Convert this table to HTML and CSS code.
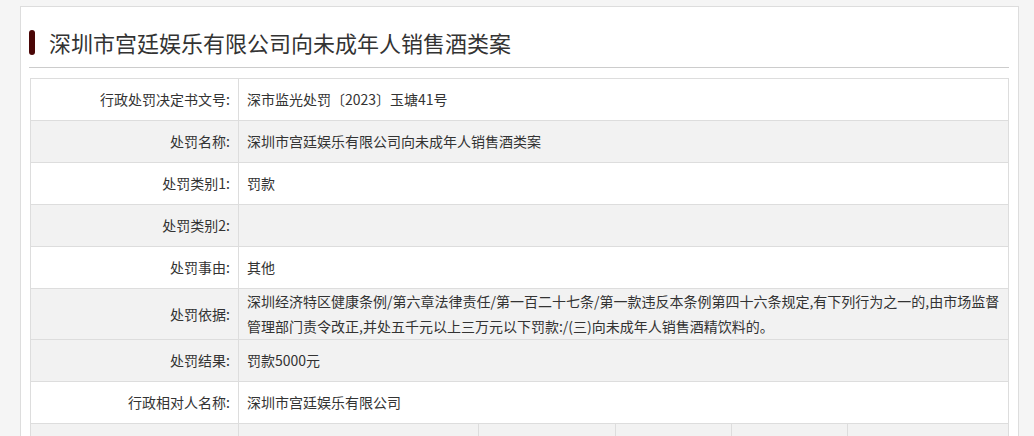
FILE: index.html
```html
<!DOCTYPE html>
<html lang="zh-CN">

<head>
    <meta charset="UTF-8">
    <meta name="viewport" content="width=device-width, initial-scale=1.0">
    <title>深圳市宫廷娱乐有限公司向未成年人销售酒类案</title>
    <link rel="stylesheet" href="styles.css">
</head>

<body>
    <div class="panel">
        <!-- 标题 -->
        <h2 class="title"><i class="title-bar"></i>深圳市宫廷娱乐有限公司向未成年人销售酒类案</h2>

        <!-- 详情表格 -->
        <table class="detail">
            <colgroup>
                <col class="c-label">
                <col class="c-a">
                <col class="c-b">
                <col class="c-c">
                <col class="c-d">
                <col class="c-e">
            </colgroup>
            <tr>
                <th>行政处罚决定书文号:</th>
                <td colspan="5">深市监光处罚〔2023〕玉塘41号</td>
            </tr>
            <tr class="odd">
                <th>处罚名称:</th>
                <td colspan="5">深圳市宫廷娱乐有限公司向未成年人销售酒类案</td>
            </tr>
            <tr>
                <th>处罚类别1:</th>
                <td colspan="5">罚款</td>
            </tr>
            <tr class="odd">
                <th>处罚类别2:</th>
                <td colspan="5"></td>
            </tr>
            <tr>
                <th>处罚事由:</th>
                <td colspan="5">其他</td>
            </tr>
            <tr class="odd">
                <th>处罚依据:</th>
                <td colspan="5">深圳经济特区健康条例/第六章法律责任/第一百二十七条/第一款违反本条例第四十六条规定,有下列行为之一的,由市场监督管理部门责令改正,并处五千元以上三万元以下罚款:/(三)向未成年人销售酒精饮料的。</td>
            </tr>
            <tr class="odd">
                <th>处罚结果:</th>
                <td colspan="5">罚款5000元</td>
            </tr>
            <tr>
                <th>行政相对人名称:</th>
                <td colspan="5">深圳市宫廷娱乐有限公司</td>
            </tr>
            <tr class="odd">
                <th></th>
                <td></td>
                <td></td>
                <td></td>
                <td></td>
                <td></td>
            </tr>
        </table>
    </div>
</body>

</html>
```

FILE: styles.css
```css
* {
    margin: 0;
    padding: 0;
}

body {
    background: #f5f5f5;
    font-family: "Microsoft YaHei", "Noto Sans CJK SC", sans-serif;
    font-size: 14px;
    color: #333;
}

/* 白色面板 */
.panel {
    width: 980px;
    margin: 6px 0 0 20px;
    padding: 0 9px 0 8px;
    background: #fff;
    border: 1px solid #ddd;
    border-bottom: 0;
}

/* 标题 */
.title {
    display: flex;
    align-items: center;
    padding: 23px 0 12px;
    height: 25px;
    line-height: 25px;
    font-size: 22px;
    font-weight: normal;
    color: #333;
    border-bottom: 1px solid #ccc;
}

.title-bar {
    display: block;
    width: 6px;
    height: 25px;
    margin-right: 14px;
    border-radius: 3px;
    background: #4a0606;
}

/* 表格 */
.detail {
    width: 979px;
    margin: 10px 0 0 1px;
    table-layout: fixed;
    border-collapse: collapse;
}

.c-label {
    width: 208px;
}

.c-a {
    width: 240px;
}

.c-b {
    width: 137px;
}

.c-c {
    width: 116px;
}

.c-d {
    width: 116px;
}

.detail th,
.detail td {
    height: 41px;
    padding: 0 8px;
    line-height: 25px;
    border: 1px solid #ddd;
    font-weight: normal;
    vertical-align: middle;
}

.detail th {
    text-align: right;
}

.detail td {
    text-align: left;
}

.detail tr.odd {
    background: #f2f2f2;
}
```
